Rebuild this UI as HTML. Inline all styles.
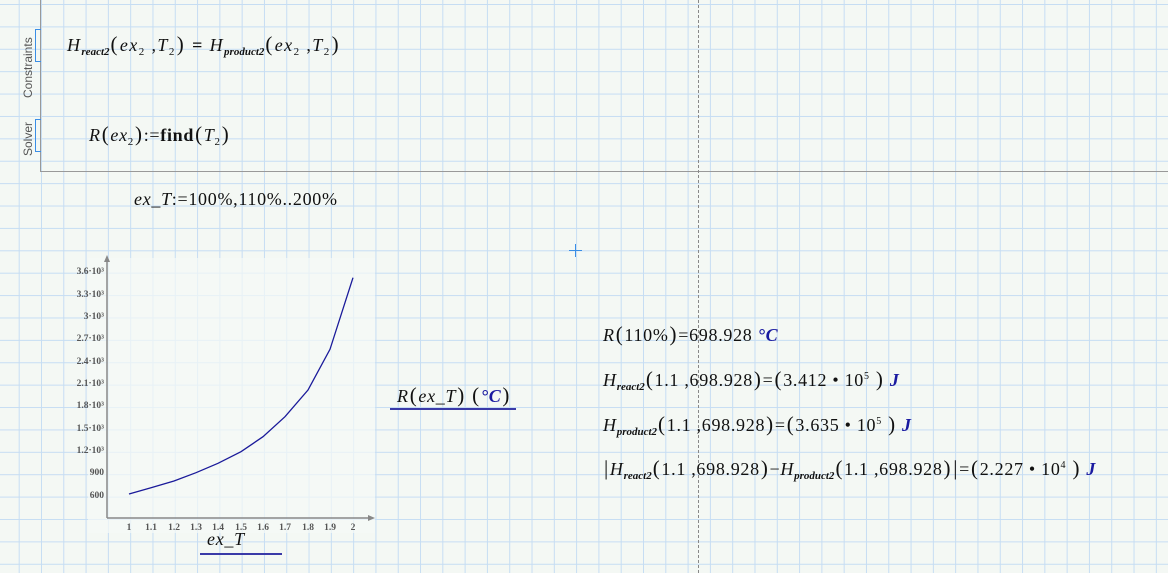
<!DOCTYPE html>
<html><head><meta charset="utf-8"><style>
html,body{margin:0;padding:0}
body{width:1168px;height:573px;overflow:hidden;position:relative;background-color:#f4f8f4;
background-image:linear-gradient(to right,#c6ddf3 1px,transparent 1px),linear-gradient(to bottom,#c6ddf3 1px,transparent 1px);
background-size:22.3px 22.4px;background-position:18.7px 4px;font-family:"Liberation Serif",serif;color:#111}
.m{position:absolute;font-size:18px;white-space:nowrap;letter-spacing:0.7px}
i{font-style:italic}
sub{font-size:11px;vertical-align:-4px;font-style:italic;font-weight:bold;letter-spacing:0}
.s{font-size:11px;vertical-align:-4px}
.u{color:#1a1aa0;font-weight:bold;font-style:italic}
.p{font-size:21px;font-weight:300;margin:0 1px}
.lab{position:absolute;transform:rotate(-90deg);transform-origin:left top;font-family:"Liberation Sans",sans-serif;font-size:12px;color:#555}
</style></head><body>
<div style="position:absolute;left:40px;top:0;width:1px;height:172px;background:#999"></div>
<div style="position:absolute;left:40px;top:171px;width:1128px;height:1px;background:#999"></div>
<div style="position:absolute;left:698px;top:0;height:573px;border-left:1px dashed #888"></div>
<div style="position:absolute;left:35px;top:29px;width:5px;height:31px;border:1px solid #3a8ee6;border-right:none"></div>
<div style="position:absolute;left:35px;top:119px;width:5px;height:31px;border:1px solid #3a8ee6;border-right:none"></div>
<div class="lab" style="left:21px;top:98px">Constraints</div>
<div class="lab" style="left:21px;top:156px">Solver</div>

<div class="m" style="left:67px;top:32px;letter-spacing:1.4px"><i>H</i><sub>react2</sub><span class="p">(</span><i>ex</i><span class="s">2</span> ,<i>T</i><span class="s">2</span><span class="p">)</span> <b>=</b> <i>H</i><sub>product2</sub><span class="p">(</span><i>ex</i><span class="s">2</span> ,<i>T</i><span class="s">2</span><span class="p">)</span></div>
<div class="m" style="left:89px;top:122px"><i>R</i><span class="p">(</span><i>ex</i><span class="s">2</span><span class="p">)</span>:=<b>find</b><span class="p">(</span><i>T</i><span class="s">2</span><span class="p">)</span></div>
<div class="m" style="left:134px;top:189px"><i>ex_T</i>:=100%,110%..200%</div>

<div style="position:absolute;left:569px;top:250px;width:13px;height:1px;background:#3a8ee6"></div>
<div style="position:absolute;left:575px;top:244px;width:1px;height:13px;background:#3a8ee6"></div>

<svg style="position:absolute;left:0;top:0" width="1168" height="573">
<rect x="88" y="258" width="287" height="275" fill="#f5f9f6" opacity="0.7"/>
<g stroke="#888" stroke-width="1.5" fill="none">
<line x1="107" y1="518" x2="107" y2="258"/><line x1="107" y1="518" x2="372" y2="518"/>
</g>
<polygon points="104,262 107,255 110,262" fill="#888"/>
<polygon points="368,515 375,518 368,521" fill="#888"/>
<g font-family="Liberation Serif" font-size="9.5" font-weight="bold" fill="#555" text-anchor="end">
<text x="104" y="274">3.6·10³</text><text x="104" y="297">3.3·10³</text><text x="104" y="319">3·10³</text>
<text x="104" y="341">2.7·10³</text><text x="104" y="364">2.4·10³</text><text x="104" y="386">2.1·10³</text>
<text x="104" y="408">1.8·10³</text><text x="104" y="431">1.5·10³</text><text x="104" y="453">1.2·10³</text>
<text x="104" y="475">900</text><text x="104" y="498">600</text>
</g>
<g font-family="Liberation Serif" font-size="9.5" font-weight="bold" fill="#555" text-anchor="middle">
<text x="129" y="530">1</text><text x="151" y="530">1.1</text><text x="174" y="530">1.2</text><text x="196" y="530">1.3</text><text x="218" y="530">1.4</text><text x="241" y="530">1.5</text><text x="263" y="530">1.6</text><text x="285" y="530">1.7</text><text x="308" y="530">1.8</text><text x="330" y="530">1.9</text><text x="353" y="530">2</text>
</g>
<polyline fill="none" stroke="#1a1a9a" stroke-width="1.3" points="129,494 151,487.7 174,481 196,472.7 218,463.3 241,451.7 263,436.7 285,416.7 308,390 330,349.3 353,277.7"/>
<line x1="200" y1="554" x2="282" y2="554" stroke="#3a3aa8" stroke-width="2"/>
<line x1="390" y1="409" x2="516" y2="409" stroke="#3a3aa8" stroke-width="2"/>
</svg>
<div class="m" style="left:207px;top:529px"><i>ex_T</i></div>
<div class="m" style="left:397px;top:383px"><i>R</i><span class="p">(</span><i>ex_T</i><span class="p">)</span>&nbsp;<span class="p">(</span><span class="u">°C</span><span class="p">)</span></div>

<div class="m" style="left:603px;top:322px"><i>R</i><span class="p">(</span>110%<span class="p">)</span>=698.928 <span class="u">°C</span></div>
<div class="m" style="left:603px;top:367px"><i>H</i><sub>react2</sub><span class="p">(</span>1.1 ,698.928<span class="p">)</span>=<span class="p">(</span>3.412 • 10<sup style="font-size:10px">5</sup> <span class="p">)</span> <span class="u">J</span></div>
<div class="m" style="left:603px;top:412px"><i>H</i><sub>product2</sub><span class="p">(</span>1.1 ,698.928<span class="p">)</span>=<span class="p">(</span>3.635 • 10<sup style="font-size:10px">5</sup> <span class="p">)</span> <span class="u">J</span></div>
<div class="m" style="left:603px;top:456px"><span class="p">|</span><i>H</i><sub>react2</sub><span class="p">(</span>1.1 ,698.928<span class="p">)</span>−<i>H</i><sub>product2</sub><span class="p">(</span>1.1 ,698.928<span class="p">)</span><span class="p">|</span>=<span class="p">(</span>2.227 • 10<sup style="font-size:10px">4</sup> <span class="p">)</span> <span class="u">J</span></div>
</body></html>
